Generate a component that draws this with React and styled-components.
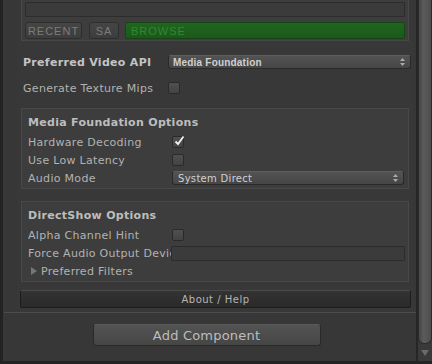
import React from "react"
import styled, { createGlobalStyle } from "styled-components"

const GlobalStyle = createGlobalStyle`
  html, body { margin: 0; padding: 0; background: #383838; overflow: hidden; }
  body {
    font-family: "DejaVu Sans", "Liberation Sans", sans-serif;
    font-size: 11px;
    letter-spacing: 0.3px;
    color: #b2b2b2;
  }
`

const Window = styled.div`
  display: flex;
  flex-direction: column;
  width: 432px;
  height: 364px;
`

const Body = styled.div`
  flex: 1;
  display: flex;
  min-height: 0;
`

const LeftEdge = styled.div`
  width: 3px;
  background: #232323;
`

const Main = styled.div`
  flex: 1;
  display: flex;
  flex-direction: column;
  background: #373737;
`

const Component = styled.div`
  margin: 0 3px 0 14px;
  padding: 0 0 4px 0;
  background: #383838;
  display: flex;
  flex-direction: column;
`

const Box = styled.div`
  margin: ${p => p.$mt || 0}px 4px 0 4px;
  background: #3d3d3d;
  border: 1px solid #484848;
  border-top: ${p => (p.$open ? "none" : "1px solid #484848")};
  padding: ${p => p.$pad};
  display: flex;
  flex-direction: column;
`

const TextField = styled.div`
  height: 13px;
  background: #3b3b3b;
  border: 1px solid #2c2c2c;
  border-radius: 1px;
  flex: ${p => (p.$grow ? 1 : "none")};
`

const ButtonRow = styled.div`
  display: flex;
  gap: 7px;
  margin-top: 5px;
`

const TabButton = styled.div`
  width: ${p => p.$w}px;
  height: 15px;
  border: 1px solid #2e2e2e;
  border-radius: 3px;
  background: linear-gradient(#454545, #3d3d3d);
  color: #7c7c7c;
  font-family: "Liberation Sans", sans-serif;
  font-size: 11px;
  letter-spacing: 1px;
  display: flex;
  align-items: center;
  justify-content: center;
`

const BrowseButton = styled.div`
  flex: 1;
  height: 15px;
  margin-left: -1px;
  border: 1px solid #164516;
  border-radius: 2px;
  background: linear-gradient(#216421, #1b591b);
  color: #2f8a2f;
  font-family: "Liberation Sans", sans-serif;
  font-size: 11px;
  letter-spacing: 1px;
  padding-left: 5px;
  display: flex;
  align-items: center;
`

const Row = styled.div`
  display: flex;
  align-items: center;
  height: 18px;
  margin-top: ${p => p.$mt || 0}px;
  padding: 0 ${p => p.$pr || 0}px 0 ${p => p.$pl || 0}px;
`

const Label = styled.div`
  width: ${p => p.$w}px;
  flex: none;
  white-space: nowrap;
  overflow: hidden;
  font-weight: ${p => (p.$bold ? "bold" : "normal")};
  color: ${p => (p.$bold ? "#c4c4c4" : "#b2b2b2")};
`

const Title = styled.div`
  height: 18px;
  display: flex;
  align-items: center;
  font-weight: bold;
  color: #bdbdbd;
  margin-bottom: 2px;
`

const Dropdown = styled.div`
  flex: 1;
  height: 12px;
  border: 1px solid #2a2a2a;
  border-top-color: #5e5e5e;
  border-radius: 3px;
  background: linear-gradient(#535353, #464646);
  color: #d0d0d0;
  display: flex;
  align-items: center;
  justify-content: space-between;
  padding: 0 5px 0 ${p => (p.$bold ? 4 : 5)}px;
  font-family: ${p => (p.$bold ? '"Liberation Sans", sans-serif' : "inherit")};
  font-size: 10px;
  font-weight: ${p => (p.$bold ? "bold" : "normal")};
  letter-spacing: ${p => (p.$bold ? "0.2px" : "0.3px")};
`

const Arrows = styled.svg`
  width: 5px;
  height: 8px;
`

const Checkbox = styled.div`
  width: 10px;
  height: 10px;
  margin-left: ${p => p.$ml || 0}px;
  border: 1px solid #2a2a2a;
  border-radius: 2px;
  background: linear-gradient(#505050, #434343);
  position: relative;
`

const Check = styled.svg`
  position: absolute;
  left: 0;
  top: -2px;
  width: 12px;
  height: 12px;
`

const Foldout = styled.div`
  display: flex;
  align-items: center;
  gap: 4px;
  padding-left: 3px;
  height: 18px;
`

const Triangle = styled.span`
  width: 0;
  height: 0;
  border-top: 4px solid transparent;
  border-bottom: 4px solid transparent;
  border-left: 6px solid #767676;
`

const AboutButton = styled.div`
  margin: 8px 2px 0 3px;
  height: 16px;
  border: 1px solid #1c1c1c;
  border-top-color: #4a4a4a;
  border-radius: 2px;
  background: linear-gradient(#333333, #2a2a2a);
  color: #b5b5b5;
  font-size: 10px;
  letter-spacing: 0.5px;
  display: flex;
  align-items: center;
  justify-content: center;
`

const Separator = styled.div`
  height: 1px;
  margin-left: 1px;
  background: #4c4c4c;
`

const Footer = styled.div`
  display: flex;
  justify-content: center;
  padding-top: 11px;
`

const AddButton = styled.div`
  width: 226px;
  height: 20px;
  margin-right: 6px;
  border: 1px solid #2a2a2a;
  border-top-color: #5a5a5a;
  border-radius: 3px;
  background: linear-gradient(#535353, #464646);
  color: #bdbdbd;
  font-size: 13px;
  letter-spacing: 0.2px;
  display: flex;
  align-items: center;
  justify-content: center;
`

const ScrollTrack = styled.div`
  width: 14px;
  display: flex;
  flex-direction: column;
  background: #393939;
  border-left: 2px solid #262626;
`

const Thumb = styled.div`
  height: 343px;
  width: 12px;
  border-radius: 0 0 6px 6px;
  background: linear-gradient(90deg, #474747, #5b5b5b 40%, #4d4d4d);
  border: 1px solid #2b2b2b;
  border-top: none;
`

const DownArrow = styled.div`
  margin: 6px auto 0 auto;
  width: 0;
  height: 0;
  border-left: 4px solid transparent;
  border-right: 4px solid transparent;
  border-top: 6px solid #6a6a6a;
`

const BottomEdge = styled.div`
  height: 3px;
  background: #242424;
`

const SelectArrows = () => (
  <Arrows viewBox="0 0 5 8">
    <path d="M2.5 0 L5 3 L0 3 Z M2.5 8 L5 5 L0 5 Z" fill="#aaaaaa" />
  </Arrows>
)

const Tick = () => (
  <Check viewBox="0 0 12 12">
    <path d="M2.5 6.5 L5 9 L10.5 1.5" stroke="#f0f0f0" strokeWidth="1.8" fill="none" />
  </Check>
)

export default function App() {
  return (
    <Window>
      <GlobalStyle />
      <Body>
        <LeftEdge />
        <Main>
          <Component>
            <Box $open $pad="2px 3px 1px 3px">
              <TextField />
              <ButtonRow>
                <TabButton $w={55}>RECENT</TabButton>
                <TabButton $w={28}>SA</TabButton>
                <BrowseButton>BROWSE</BrowseButton>
              </ButtonRow>
            </Box>

            <Row $pl={6} $pr={2} $mt={12}>
              <Label $w={145} $bold>Preferred Video API</Label>
              <Dropdown $bold>
                Media Foundation
                <SelectArrows />
              </Dropdown>
            </Row>
            <Row $pl={6} $mt={8}>
              <Label $w={145}>Generate Texture Mips</Label>
              <Checkbox />
            </Row>

            <Box $mt={11} $pad="4px 4px 1px 6px">
              <Title>Media Foundation Options</Title>
              <Row>
                <Label $w={143}>Hardware Decoding</Label>
                <Checkbox $ml={1}><Tick /></Checkbox>
              </Row>
              <Row>
                <Label $w={143}>Use Low Latency</Label>
                <Checkbox $ml={1} />
              </Row>
              <Row>
                <Label $w={144}>Audio Mode</Label>
                <Dropdown>
                  System Direct
                  <SelectArrows />
                </Dropdown>
              </Row>
            </Box>

            <Box $mt={12} $pad="4px 3px 1px 6px">
              <Title>DirectShow Options</Title>
              <Row>
                <Label $w={143}>Alpha Channel Hint</Label>
                <Checkbox $ml={1} />
              </Row>
              <Row>
                <Label $w={143}>Force Audio Output Device</Label>
                <TextField $grow />
              </Row>
              <Foldout>
                <Triangle />
                Preferred Filters
              </Foldout>
            </Box>

            <AboutButton>About / Help</AboutButton>
          </Component>
          <Separator />
          <Footer>
            <AddButton>Add Component</AddButton>
          </Footer>
        </Main>
        <ScrollTrack>
          <Thumb />
          <DownArrow />
        </ScrollTrack>
      </Body>
      <BottomEdge />
    </Window>
  )
}
